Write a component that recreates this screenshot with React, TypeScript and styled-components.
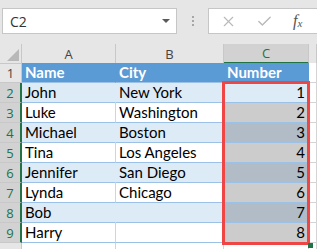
import styled, { createGlobalStyle } from "styled-components";
import { X, Check } from "lucide-react";

const COLS = "22px 94px 108px 85px 1fr";

const GlobalStyle = createGlobalStyle`
	html, body {
		margin: 0;
		padding: 0;
		background: #e6e6e6;
		overflow: hidden;
	}
	body {
		width: 317px;
		height: 249px;
		font-family: Lato, "Liberation Sans", sans-serif;
	}
`;

const rows = [
	{ name: "John", city: "New York", n: 1 },
	{ name: "Luke", city: "Washington", n: 2 },
	{ name: "Michael", city: "Boston", n: 3 },
	{ name: "Tina", city: "Los Angeles", n: 4 },
	{ name: "Jennifer", city: "San Diego", n: 5 },
	{ name: "Lynda", city: "Chicago", n: 6 },
	{ name: "Bob", city: "", n: 7 },
	{ name: "Harry", city: "", n: 8 },
];

const App = () => {
	return (
		<>
			<GlobalStyle />
			<FormulaBar>
				<NameBox>
					<span>C2</span>
					<Caret />
				</NameBox>
				<Dots>
					<i />
					<i />
					<i />
				</Dots>
				<FormulaBox>
					<X size={17} strokeWidth={1.6} color="#b9b9b9" />
					<Check size={17} strokeWidth={2} color="#b9b9b9" />
					<Fx>
						f<sub>x</sub>
					</Fx>
				</FormulaBox>
			</FormulaBar>

			<Sheet>
				<Row>
					<Corner />
					<ColHead>A</ColHead>
					<ColHead>B</ColHead>
					<ColHead selected>C</ColHead>
					<ColHead />
				</Row>

				<Row>
					<RowHead>1</RowHead>
					<Cell kind="head">Name</Cell>
					<Cell kind="head">City</Cell>
					<Cell kind="head">Number</Cell>
					<Cell kind="plain" />
				</Row>

				{rows.map((r, i) => {
					const kind = i % 2 === 0 ? "band" : "white";
					return (
						<Row key={r.name}>
							<RowHead selected>{i + 2}</RowHead>
							<Cell kind={kind}>{r.name}</Cell>
							<Cell kind={kind}>{r.city}</Cell>
							<Cell kind={kind} shaded={i > 0} right>
								{r.n}
							</Cell>
							<Cell kind="plain" />
						</Row>
					);
				})}

				{/* next row, only its top edge shows in the frame */}
				<Row>
					<RowHead />
					<Cell kind="plain" />
					<Cell kind="plain" />
					<Cell kind="plain" />
					<Cell kind="plain" />
				</Row>

				<Highlight>
					<Handle />
				</Highlight>
			</Sheet>
		</>
	);
};

const FormulaBar = styled.div`
	display: flex;
	align-items: center;
	height: 44px;
	padding: 8px 0 10px 2px;
	box-sizing: border-box;
`;

const NameBox = styled.div`
	display: flex;
	align-items: center;
	justify-content: space-between;
	width: 175px;
	height: 26px;
	box-sizing: border-box;
	padding: 0 6px 0 7px;
	background: #fff;
	border: 1px solid #c6c6c6;
	font-family: "Open Sans", sans-serif;
	font-size: 14px;
	color: #333;
`;

const Caret = styled.span`
	width: 0;
	height: 0;
	border-left: 4px solid transparent;
	border-right: 4px solid transparent;
	border-top: 4px solid #5a5a5a;
`;

const Dots = styled.div`
	display: flex;
	flex-direction: column;
	gap: 2px;
	margin: 0 14px 0 15px;

	i {
		width: 2px;
		height: 2px;
		background: #a6a6a6;
	}
`;

const FormulaBox = styled.div`
	display: flex;
	align-items: center;
	gap: 19px;
	flex: 1;
	height: 26px;
	box-sizing: border-box;
	padding-left: 11px;
	background: #fff;
	border: 1px solid #c6c6c6;
	border-right: none;
`;

const Fx = styled.span`
	margin-left: 1px;
	font-family: "Liberation Serif", serif;
	font-style: italic;
	font-size: 16px;
	color: #555;

	sub {
		font-size: 11px;
		vertical-align: -1px;
	}
`;

const Sheet = styled.div`
	position: relative;
	background: #fff;
`;

const Row = styled.div`
	display: grid;
	grid-template-columns: ${COLS};
	height: 20px;

	&:first-child {
		height: 19px;
	}
`;

const Corner = styled.div`
	position: relative;
	background: #e6e6e6;
	border-right: 1px solid #c8c8c8;
	border-bottom: 1px solid #c8c8c8;

	&::after {
		content: "";
		position: absolute;
		right: 2px;
		bottom: 2px;
		border-left: 12px solid transparent;
		border-bottom: 12px solid #b8b8b8;
	}
`;

const ColHead = styled.div<{ selected?: boolean }>`
	display: flex;
	align-items: center;
	justify-content: center;
	box-sizing: border-box;
	background: ${(p) => (p.selected ? "#d2d2d2" : "#e6e6e6")};
	color: ${(p) => (p.selected ? "#217346" : "#444")};
	border-right: 1px solid #c8c8c8;
	border-bottom: ${(p) => (p.selected ? "2px solid #217346" : "1px solid #c8c8c8")};
	font-family: "Open Sans", sans-serif;
	font-size: 13px;
`;

const RowHead = styled.div<{ selected?: boolean }>`
	display: flex;
	align-items: center;
	justify-content: center;
	box-sizing: border-box;
	background: ${(p) => (p.selected ? "#d2d2d2" : "#e6e6e6")};
	color: ${(p) => (p.selected ? "#217346" : "#444")};
	border-bottom: 1px solid #c8c8c8;
	border-right: ${(p) => (p.selected ? "2px solid #217346" : "1px solid #c8c8c8")};
	font-family: "Open Sans", sans-serif;
	font-size: 13px;
`;

const fills = {
	head: "#5b9bd5",
	band: "#ddebf7",
	white: "#ffffff",
	plain: "#ffffff",
};

const Cell = styled.div<{
	kind: "head" | "band" | "white" | "plain";
	shaded?: boolean;
	right?: boolean;
}>`
	display: flex;
	align-items: flex-end;
	justify-content: ${(p) => (p.right ? "flex-end" : "flex-start")};
	box-sizing: border-box;
	padding: 0 3px 1px 3px;
	overflow: hidden;
	white-space: nowrap;
	font-size: 15px;
	line-height: 18px;
	color: ${(p) => (p.kind === "head" ? "#fff" : "#000")};
	font-weight: ${(p) => (p.kind === "head" ? 700 : 400)};
	background: ${(p) =>
		p.shaded
			? `linear-gradient(rgba(0,0,0,0.2), rgba(0,0,0,0.2)), ${fills[p.kind]}`
			: fills[p.kind]};
	border-bottom: 1px solid
		${(p) => (p.kind === "plain" ? "#d4d4d4" : "#9bc2e6")};
	border-right: 1px solid
		${(p) =>
			p.kind === "white" || p.kind === "plain" ? "#d4d4d4" : "transparent"};
`;

const Highlight = styled.div`
	position: absolute;
	left: 222px;
	top: 37px;
	width: 88px;
	height: 164px;
	box-sizing: border-box;
	border: 3px solid #f04545;
	pointer-events: none;
`;

const Handle = styled.div`
	position: absolute;
	right: -6px;
	bottom: -6px;
	width: 5px;
	height: 5px;
	background: #217346;
`;

export default App;
